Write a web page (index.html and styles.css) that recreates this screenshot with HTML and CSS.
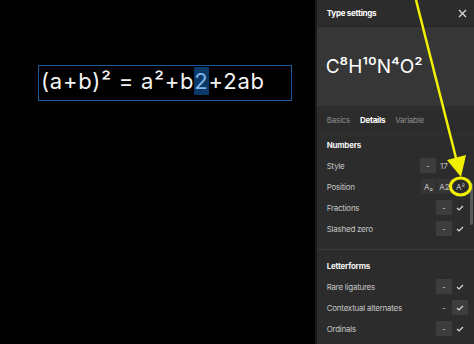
FILE: index.html
```html
<!DOCTYPE html>
<html lang="en">
<head>
  <meta charset="UTF-8">
  <meta name="viewport" content="width=device-width, initial-scale=1.0">
  <link rel="stylesheet" href="styles.css">
  <title>Type settings</title>
</head>
<body>
  <div class="app">
    <main class="canvas">
      <div class="text-frame"><span>(a+b)² = a²+b</span><span class="sel">2</span><span>+2ab</span></div>
    </main>

    <aside class="panel">
      <header class="panel-head">
        <span class="panel-title">Type settings</span>
        <svg class="close" width="9" height="9" viewBox="0 0 9 9">
          <path d="M1 1 L8 8 M8 1 L1 8" stroke="#d8d8d8" stroke-width="1.3" fill="none"/>
        </svg>
      </header>

      <div class="preview">C⁸H¹⁰N⁴O²</div>

      <nav class="tabs">
        <span>Basics</span>
        <span class="active">Details</span>
        <span>Variable</span>
      </nav>

      <section class="group">
        <h3>Numbers</h3>
        <div class="row">
          <span>Style</span>
          <div class="ctrls">
            <span class="cell box">-</span>
            <span class="cell">17</span>
            <span class="cell"></span>
          </div>
        </div>
        <div class="row">
          <span>Position</span>
          <div class="ctrls">
            <span class="cell box pos">A₂</span>
            <span class="cell box pos">A2</span>
            <span class="cell pos">A²</span>
          </div>
        </div>
        <div class="row">
          <span>Fractions</span>
          <div class="ctrls">
            <span class="cell"></span>
            <span class="cell box">-</span>
            <span class="cell"><svg class="check" viewBox="0 0 8 6"><path d="M1 3 L3 5 L7 1"/></svg></span>
          </div>
        </div>
        <div class="row">
          <span>Slashed zero</span>
          <div class="ctrls">
            <span class="cell"></span>
            <span class="cell box">-</span>
            <span class="cell"><svg class="check" viewBox="0 0 8 6"><path d="M1 3 L3 5 L7 1"/></svg></span>
          </div>
        </div>
      </section>

      <section class="group second">
        <h3>Letterforms</h3>
        <div class="row">
          <span>Rare ligatures</span>
          <div class="ctrls">
            <span class="cell"></span>
            <span class="cell box">-</span>
            <span class="cell"><svg class="check" viewBox="0 0 8 6"><path d="M1 3 L3 5 L7 1"/></svg></span>
          </div>
        </div>
        <div class="row">
          <span>Contextual alternates</span>
          <div class="ctrls">
            <span class="cell"></span>
            <span class="cell">-</span>
            <span class="cell box"><svg class="check" viewBox="0 0 8 6"><path d="M1 3 L3 5 L7 1"/></svg></span>
          </div>
        </div>
        <div class="row">
          <span>Ordinals</span>
          <div class="ctrls">
            <span class="cell"></span>
            <span class="cell box">-</span>
            <span class="cell"><svg class="check" viewBox="0 0 8 6"><path d="M1 3 L3 5 L7 1"/></svg></span>
          </div>
        </div>
      </section>

      <div class="scrollbar"></div>
    </aside>

    <!-- yellow annotation drawn over the screenshot -->
    <svg class="annot" width="474" height="344" viewBox="0 0 474 344">
      <line x1="416" y1="0" x2="456" y2="158" stroke="#f0f000" stroke-width="2.5"/>
      <polygon points="461,177 466,155 447,160" fill="#f0f000"/>
      <ellipse cx="460.5" cy="186.5" rx="10" ry="8.5" fill="none" stroke="#f0f000" stroke-width="3"/>
    </svg>
  </div>
</body>
</html>
```

FILE: styles.css
```css
body {
  margin: 0;
  background: #000000;
  font-family: 'Inter', 'Noto Sans', sans-serif;
}

.app {
  position: relative;
  display: flex;
  width: 474px;
  height: 344px;
  overflow: hidden;
}

.canvas {
  width: 316px;
  padding: 65px 0 0 38px;
  box-sizing: border-box;
  background: #000000;
}

.text-frame {
  width: 254px;
  height: 36px;
  box-sizing: border-box;
  border: 1px solid #1c5a96;
  padding: 1px 0 0 2px;
  color: #f4f4f4;
  font-size: 22px;
  letter-spacing: 0.8px;
  line-height: 28px;
  white-space: nowrap;
}

.text-frame .sel {
  display: inline-block;
  height: 28px;
  background: #0c3a68;
  color: #7fb6ea;
}

.panel {
  position: relative;
  width: 158px;
  border-left: 2px solid #1a1a1a;
  background: #2c2c2c;
  color: #c4c4c4;
  font-size: 8px;
  letter-spacing: -0.25px;
}

.panel-head {
  height: 26px;
  display: flex;
  align-items: center;
  justify-content: space-between;
  padding: 0 7px 0 10px;
  border-bottom: 1px solid #242424;
}

.panel-title {
  color: #ffffff;
  font-weight: 700;
  font-size: 8px;
}

.preview {
  height: 79px;
  display: flex;
  align-items: center;
  padding-left: 9px;
  background: #363636;
  color: #ffffff;
  font-size: 19px;
  letter-spacing: 0;
}

.tabs {
  height: 28px;
  display: flex;
  align-items: center;
  gap: 10px;
  padding-left: 10px;
  border-bottom: 1px solid #343434;
  color: #8c8c8c;
}

.tabs .active {
  color: #ffffff;
  font-weight: 700;
}

.group {
  padding-bottom: 10px;
  border-bottom: 1px solid #3a3a3a;
}

.group.second {
  padding-top: 6px;
  border-bottom: none;
}

.group h3 {
  margin: 0;
  height: 20px;
  line-height: 20px;
  padding-left: 10px;
  color: #f2f2f2;
  font-size: 8px;
  font-weight: 700;
}

.row {
  height: 21px;
  display: flex;
  align-items: center;
  justify-content: space-between;
  padding: 0 6px 0 10px;
}

.ctrls {
  display: flex;
}

.cell {
  width: 16px;
  height: 15px;
  display: flex;
  align-items: center;
  justify-content: center;
  color: #c8c8c8;
  letter-spacing: 0;
}

.cell.box {
  background: #3d3d3d;
  border-radius: 1px;
}

.cell.pos {
  width: 15px;
  margin-left: 1px;
  background-color: #353535;
}

.cell.pos:last-child {
  background: #2a2a2a;
}

.check {
  width: 8px;
  height: 6px;
}

.check path {
  fill: none;
  stroke: #d8d8d8;
  stroke-width: 1.2;
}

.scrollbar {
  position: absolute;
  right: 1px;
  top: 183px;
  width: 3px;
  height: 42px;
  background: #5a5a5a;
  border-radius: 2px;
}

.annot {
  position: absolute;
  left: 0;
  top: 0;
}
```
